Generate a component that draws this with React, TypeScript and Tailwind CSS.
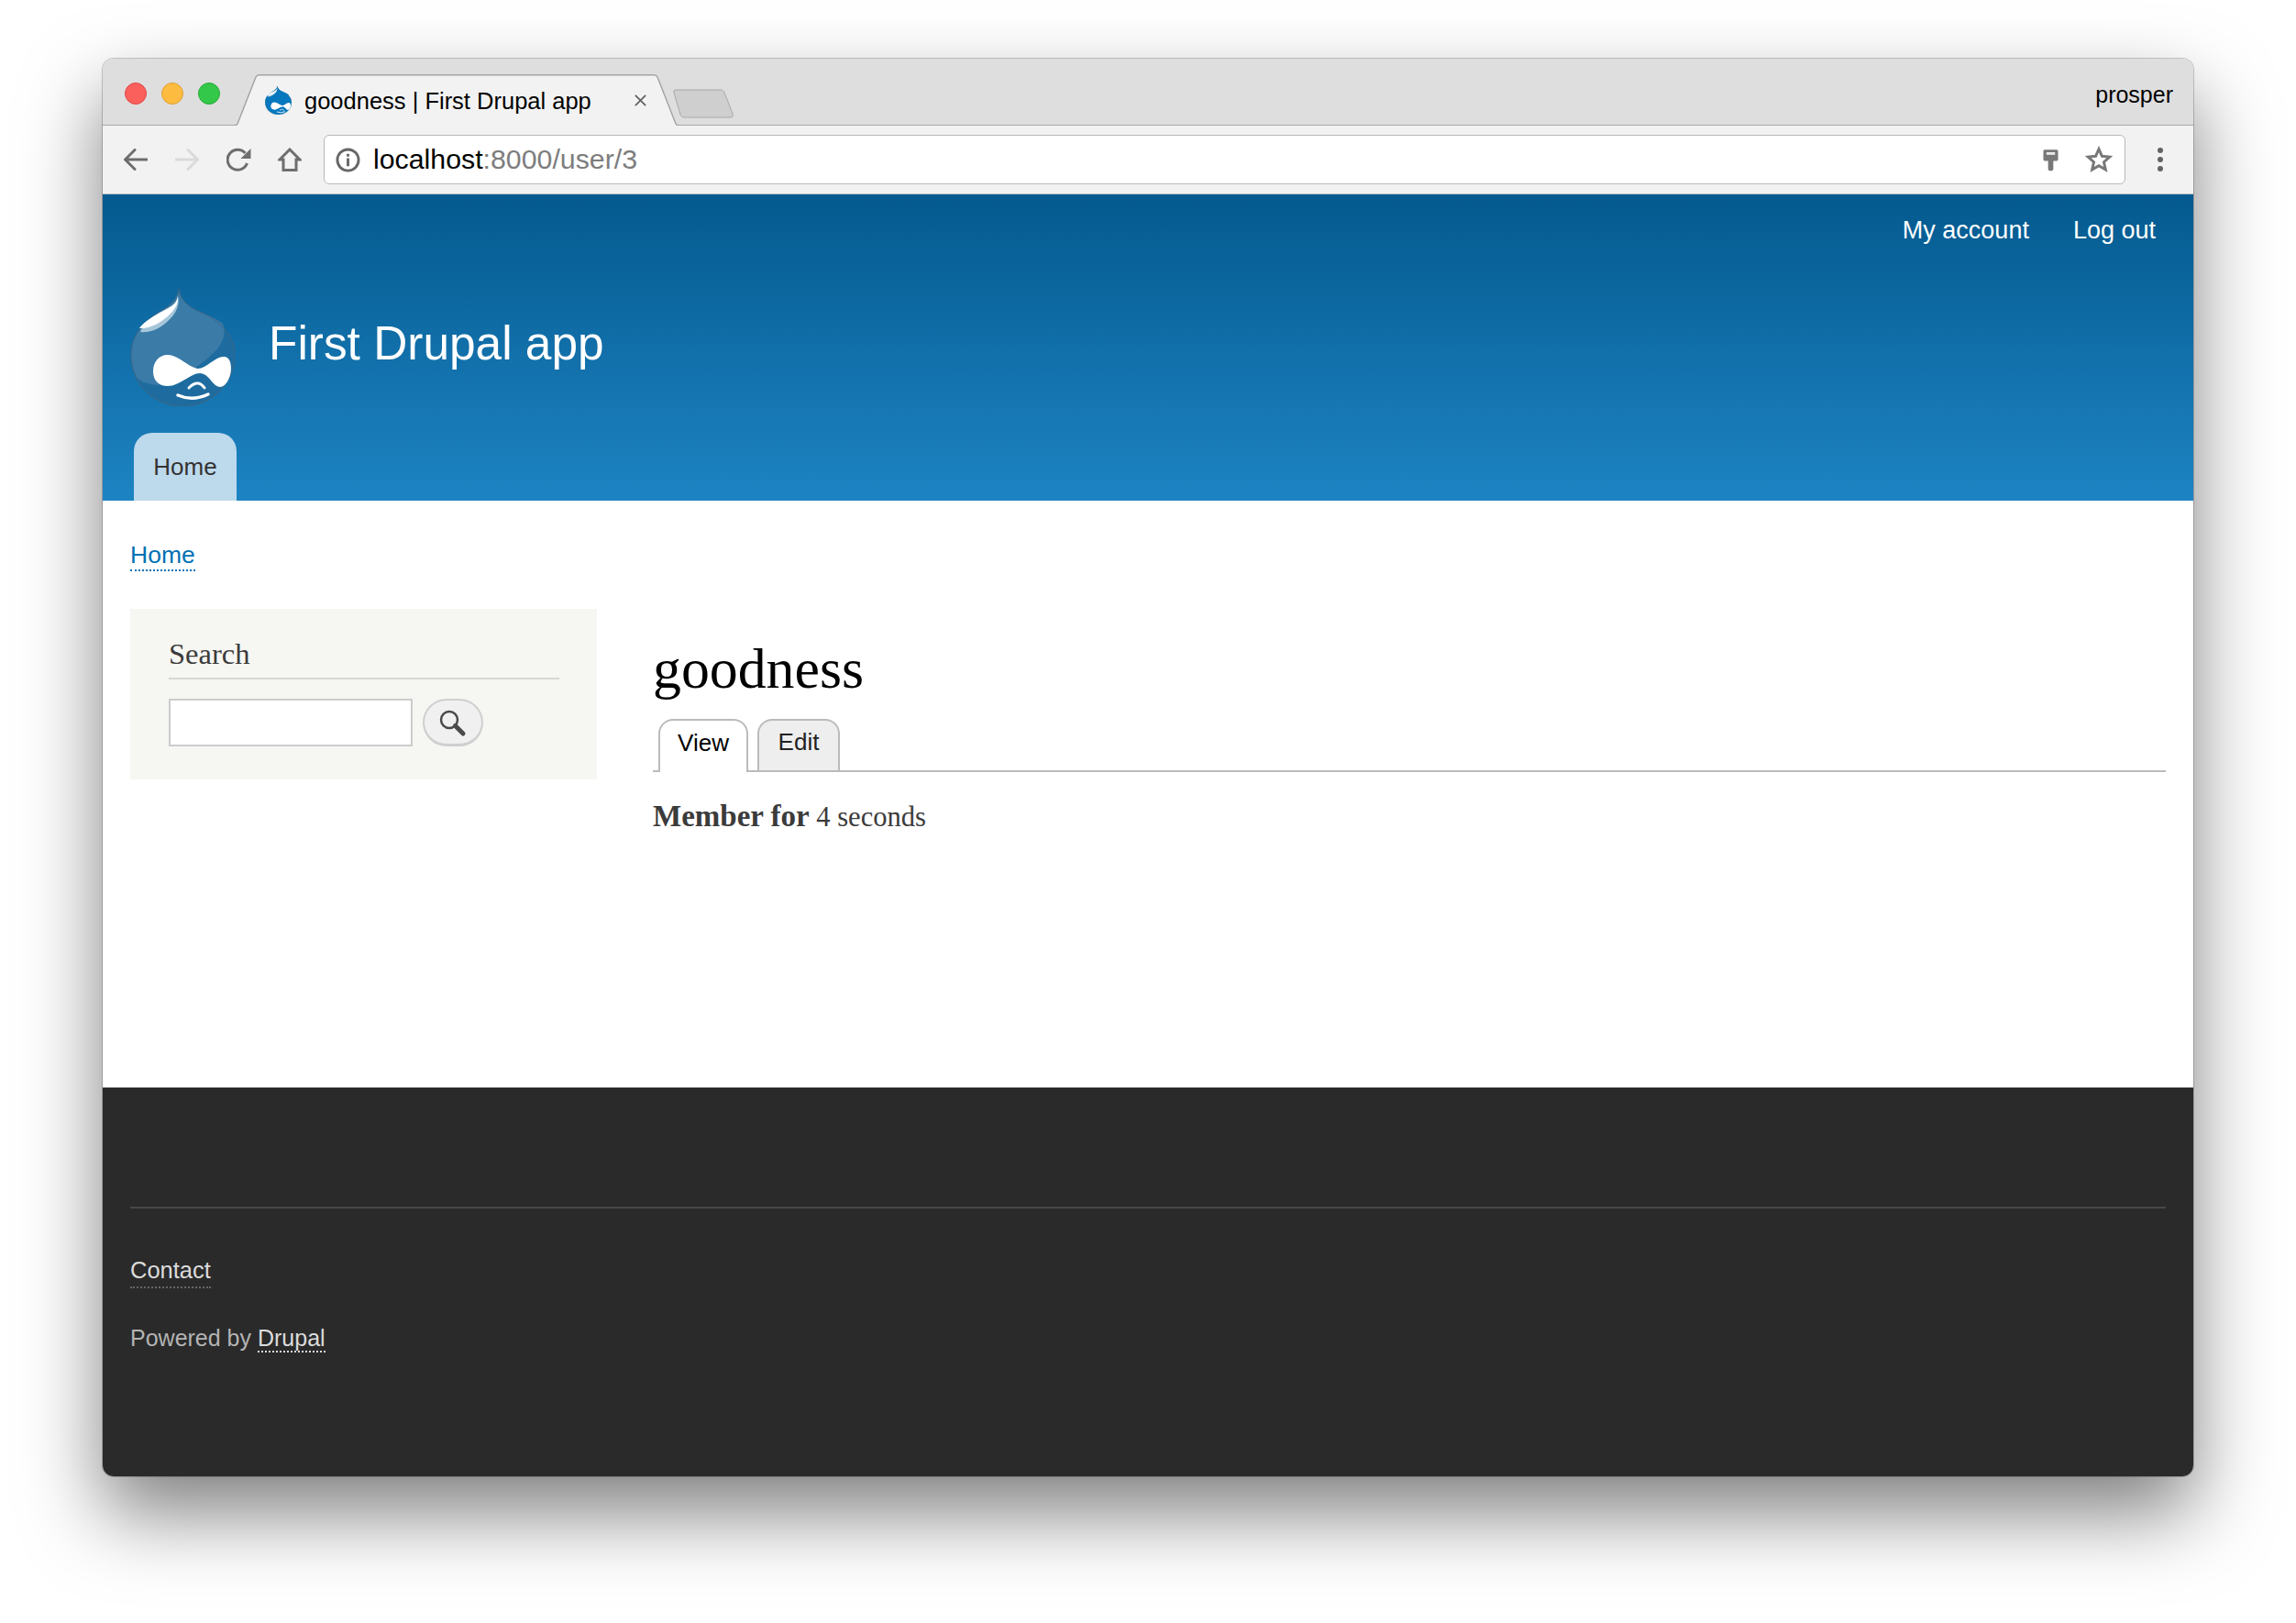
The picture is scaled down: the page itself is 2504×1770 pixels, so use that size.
const sans = "font-['Liberation_Sans',Arial,sans-serif]"
const serif = "font-['Liberation_Serif','Times_New_Roman',serif]"

const dropOutline = "M53 0C54 10 62 20 78 26C100 36 114 52 114 72C114 104 88 128 57 128C26 128 1 104 1 72C1 48 18 34 32 25C42 19 52 12 53 0Z"

function DrupalDrop({ className, body, light, glare }: { className: string; body: string; light: string; glare: string }) {
  return (
    <svg viewBox="0 0 114 128" className={className} preserveAspectRatio="none">
      <path d={dropOutline} fill={body} />
      <path
        d="M53 1C54 10 62 20 78 26C88 30 96 34 101 38C108 58 90 72 73 85L40 104C28 106 16 104 8 98C3 90 1 82 1 72C1 48 18 34 32 25C42 19 52 12 53 1Z"
        fill={light}
      />
      <path d={dropOutline} fill="none" stroke="#3f6682" strokeWidth="1" />
      <path d="M52 8C51 22 44 24 33 31C22 38 13 40 11 47C22 49 36 42 46 30C51 24 54 16 52 8Z" fill="#a6c6da" />
      <path d="M52 8C50 18 43 20 32 26C22 32 14 37 10 43C20 44 32 38 42 29C48 23 53 17 52 8Z" fill={glare} />
      <path
        d="M41 72C52 72 62 84 73 87C82 88 92 74 102 74C108 74 110 80 110 87C110 95 105 107 98 107C90 107 86 92 76 92C66 92 54 106 41 106C31 106 25 100 25 90C25 80 31 72 41 72Z"
        fill="#fff"
      />
      <path d="M52 116Q68 123 85 115" fill="none" stroke="#fff" strokeWidth="3.5" strokeLinecap="round" />
      <path d="M64 108Q74 98 81 108" fill="none" stroke="#fff" strokeWidth="3" strokeLinecap="round" />
    </svg>
  )
}

function TrafficLight({ fill, edge }: { fill: string; edge: string }) {
  return <span className={`w-6 h-6 rounded-full border ${fill} ${edge}`} />
}

function BrowserTab() {
  return (
    <div className="relative w-[484px] h-[56px] -mb-px ml-[16px] flex items-center pl-[33px]">
      <svg viewBox="0 0 484 56" className="absolute inset-0 w-full h-full">
        <path d="M0 55.5H1C2 55.5 2.500 55 3 54L23 3C24 1 25 .8 27 .8H457C459 .8 460 1 461 3L481 54C481.500 55 482 55.500 484 55.500V56H0Z" fill="#f2f2f2" />
        <path d="M0 55.500H1C2 55.500 2.500 55 3 54L23 3C24 1 25 .8 27 .8H457C459 .8 460 1 461 3L481 54C481.500 55 482 55.500 484 55.500" fill="none" stroke="#a4a4a4" strokeWidth="1.500" />
      </svg>
      <DrupalDrop className="relative w-[29px] h-[31px]" body="#0678be" light="#0678be" glare="#ffffff" />
      <span className={`relative ml-[14px] pt-[2px] text-[25.500px] text-black ${sans}`}>goodness | First Drupal app</span>
      <svg viewBox="0 0 16 16" className="absolute left-[435px] top-[21px] w-[15px] h-[15px]">
        <path d="M2 2L14 14M14 2L2 14" stroke="#5f5f5f" strokeWidth="1.800" />
      </svg>
    </div>
  )
}

function Toolbar() {
  return (
    <div className="h-[75px] bg-[#f2f2f2] flex items-center pl-[23px] pr-[27px] border-b border-[#c4c4c4]">
      <div className="flex items-center gap-[30px]">
        <svg viewBox="0 0 26 24" className="w-[26px] h-6" fill="none" stroke="#6e6e6e" strokeWidth="3" strokeLinecap="round" strokeLinejoin="round">
          <path d="M25 12H2M12 1.500L1.500 12L12 22.500" />
        </svg>
        <svg viewBox="0 0 26 24" className="w-[26px] h-6" fill="none" stroke="#dadada" strokeWidth="3" strokeLinecap="round" strokeLinejoin="round">
          <path d="M1 12H24M14 1.500L24.500 12L14 22.500" />
        </svg>
        <svg viewBox="0 0 27 26" className="w-[27px] h-[26px]">
          <path d="M22.500 17A11 11 0 1 1 20.500 6" fill="none" stroke="#6e6e6e" strokeWidth="3" />
          <path d="M26.500 1V12H15.500Z" fill="#6e6e6e" />
        </svg>
        <svg viewBox="0 0 26 26" className="w-[26px] h-[26px] -ml-[1px]" fill="none" stroke="#6e6e6e" strokeWidth="3" strokeLinejoin="miter">
          <path d="M13 2L24 13H20V24.500H6V13H2Z" />
        </svg>
      </div>
      <div className="ml-6 w-[1965px] h-[54px] bg-white rounded-[6px] border border-[#b8b8b8] flex items-center pl-[12px] pr-[13px]">
        <svg viewBox="0 0 28 28" className="w-[27px] h-[27px]">
          <circle cx="14" cy="14" r="12" fill="none" stroke="#676767" strokeWidth="3" />
          <path d="M14 12V21M14 7V10" stroke="#676767" strokeWidth="3" />
        </svg>
        <div className={`ml-[14px] text-[30.300px] text-[#7d7d7d] ${sans}`}>
          <span className="text-black">localhost</span>:8000/user/3
        </div>
        <svg viewBox="0 0 18 26" className="ml-auto w-[17px] h-[25px]">
          <path d="M2 1H16C17 1 17.500 2 17.500 3V12C17.500 13 17 14 16 14H12V23C12 25 10.500 25.500 9 25.500C7.500 25.500 6 25 6 23V14H2C1 14 .5 13 .5 12V3C.5 2 1 1 2 1Z" fill="#787878" />
          <rect x="4" y="4" width="10" height="3" fill="#e8e8e8" />
        </svg>
        <svg viewBox="0 0 30 30" className="ml-[29px] w-[30px] h-[30px]">
          <path d="M15 3.500L18.400 11.300L26.800 12.100L20.500 17.700L22.300 26L15 21.700L7.700 26L9.500 17.700L3.200 12.100L11.600 11.300Z" fill="none" stroke="#787878" strokeWidth="3" />
        </svg>
      </div>
      <div className="ml-auto flex flex-col gap-[4px] mr-[6px]">
        <span className="w-[6px] h-[6px] rounded-full bg-[#636363]" />
        <span className="w-[6px] h-[6px] rounded-full bg-[#636363]" />
        <span className="w-[6px] h-[6px] rounded-full bg-[#636363]" />
      </div>
    </div>
  )
}

function SiteHeader() {
  return (
    <header className={`h-[334px] bg-gradient-to-b from-[#045a8f] to-[#1d84c3] flex flex-col ${sans}`}>
      <div className="flex justify-end gap-[48px] pt-[20px] pr-[41px] text-[27px] leading-[38px] text-white">
        <span>My account</span>
        <span>Log out</span>
      </div>
      <div className="flex items-start mt-[45px] pl-[30px]">
        <DrupalDrop className="w-[114px] h-[128px]" body="#1e6c9f" light="#3a7ba8" glare="#ffffff" />
        <span className="ml-[37px] mt-[29px] text-[51.400px] leading-[60px] text-white">First Drupal app</span>
      </div>
      <div className="mt-auto pl-[34px]">
        <div className="w-[112px] h-[74px] rounded-t-[20px] bg-[#bdd9ec] flex items-center justify-center text-[26px] text-[#333]">Home</div>
      </div>
    </header>
  )
}

function MainContent() {
  return (
    <main className="h-[640px] bg-white pt-[43px] pl-[30px] pr-[30px]">
      <a className={`block w-fit text-[26.500px] leading-[32px] text-[#0071b3] border-b-2 border-dotted border-[#0071b3] ${sans}`}>Home</a>
      <div className="flex mt-[41px]">
        <aside className="w-[509px] h-[186px] bg-[#f6f6f2] px-[42px] pt-[30px]">
          <div className={`w-[426px] h-[47px] text-[32.500px] leading-[38px] text-[#3b3b3b] border-b-2 border-[#d6d6d6] ${serif}`}>Search</div>
          <div className="flex gap-[11px] mt-[21px]">
            <input className="w-[266px] h-[52px] bg-white border-2 border-[#cccccc]" />
            <button className="w-[66px] h-[52px] rounded-full bg-[#f0f0f0] border-2 border-b-[3px] border-[#cfcfcf] flex items-center justify-center">
              <svg viewBox="0 0 32 32" className="w-[32px] h-[32px] -ml-[3px]">
                <circle cx="13" cy="13" r="9" fill="none" stroke="#4a4a4a" strokeWidth="2.500" />
                <path d="M19.500 19.500L28 28" stroke="#4a4a4a" strokeWidth="5" strokeLinecap="round" />
              </svg>
            </button>
          </div>
        </aside>
        <section className="flex-1 ml-[61px]">
          <h1 className={`mt-[30px] text-[61.800px] leading-[70px] text-black ${serif}`}>goodness</h1>
          <div className={`flex h-[58px] mt-[20px] pl-[6px] gap-[10px] border-b-2 border-[#bbbbbb] text-[26px] ${sans}`}>
            <span className="w-[98px] h-[58px] pb-[8px] bg-white rounded-t-[16px] border-2 border-b-0 border-[#bbbbbb] flex items-center justify-center text-black">View</span>
            <span className="w-[90px] h-[56px] pb-[8px] bg-[#eeeeee] rounded-t-[16px] border-2 border-b-0 border-[#bbbbbb] flex items-center justify-center text-[#222]">Edit</span>
          </div>
          <p className={`mt-[29px] text-[30.500px] leading-[38px] text-[#3b3b3b] ${serif}`}>
            <b className="text-[33px]">Member for</b> 4 seconds
          </p>
        </section>
      </div>
    </main>
  )
}

function SiteFooter() {
  return (
    <footer className={`flex-1 bg-[#2a2a2a] pl-[30px] pr-[30px] pt-[130px] ${sans}`}>
      <div className="border-t-2 border-[#484848]" />
      <a className="block w-fit mt-[49px] text-[25.500px] leading-[36px] text-[#dcdcdc] border-b-2 border-dotted border-[#666666]">Contact</a>
      <p className="mt-[37px] text-[25px] leading-[34px] text-[#b4b4b4]">
        Powered by <a className="text-[#dcdcdc] border-b-2 border-dotted border-[#dddddd]">Drupal</a>
      </p>
    </footer>
  )
}

export default function App() {
  return (
    <div className="w-[2504px] h-[1770px] bg-white pt-[64px] pl-[112px]">
      <div className="w-[2280px] h-[1546px] rounded-[12px] overflow-hidden flex flex-col shadow-[0_0_0_1px_rgba(0,0,0,0.2),0_40px_85px_rgba(0,0,0,0.5)]">
        <div className="h-[73px] bg-[#dedede] flex items-end border-b border-[#a8a8a8]">
          <div className="self-center flex gap-4 pl-[24px] pt-[4px]">
            <TrafficLight fill="bg-[#fc605c]" edge="border-[#df4744]" />
            <TrafficLight fill="bg-[#fdbc40]" edge="border-[#de9f34]" />
            <TrafficLight fill="bg-[#34c84a]" edge="border-[#27aa35]" />
          </div>
          <BrowserTab />
          <svg viewBox="0 0 66 32" className="self-start mt-[33px] -ml-[6px] w-[66px] h-[32px]">
            <path d="M3 1H52C54 1 55 2 56 4L65 27C66 30 65 31 62 31H12C10 31 9 30 8 28L1 4C.5 2 1 1 3 1Z" fill="#cfcfcf" stroke="#a8a8a8" />
          </svg>
          <span className={`ml-auto self-center pr-[22px] pt-[7px] text-[25px] text-black ${sans}`}>prosper</span>
        </div>
        <Toolbar />
        <SiteHeader />
        <MainContent />
        <SiteFooter />
      </div>
    </div>
  )
}
